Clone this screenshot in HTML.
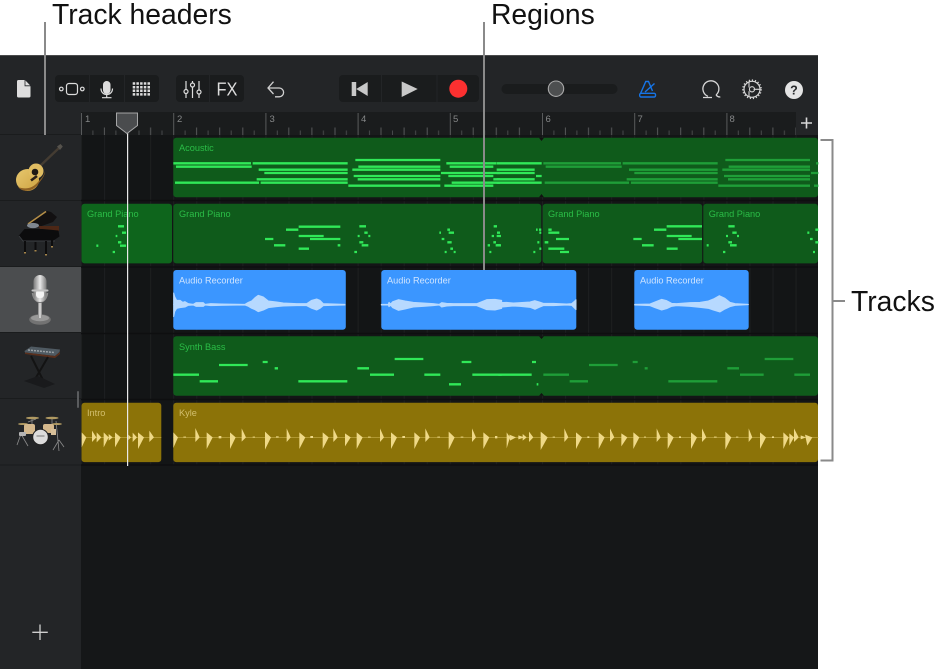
<!DOCTYPE html>
<html><head><meta charset="utf-8"><style>
html,body{margin:0;padding:0;background:#fff;width:948px;height:670px;overflow:hidden}
svg{display:block}
text{font-family:"Liberation Sans",sans-serif}
.c{font-size:28.300px;fill:#111}
.r{font-size:9.200px}
.n{font-size:9.500px;fill:#858788}
.on{fill:none;stroke:#30e858}
.fd{fill:none;stroke:#1f9e38}
</style></head><body>
<svg width="948" height="670" viewBox="0 0 948 670" xmlns="http://www.w3.org/2000/svg">
<defs>
<pattern id="rul" patternUnits="userSpaceOnUse" x="81" y="112" width="92.2" height="23">
<rect x="0" y="1" width="1" height="22" fill="#585a5b"/>
<path d="M11.9 18.500v4.500M34.900 18.500v4.500M58 18.500v4.500M81 18.500v4.500" stroke="#47494a" stroke-width="1"/>
<path d="M23.400 15.500v7.500M46.500 15.500v7.500M69.600 15.500v7.500" stroke="#565859" stroke-width="1"/>
</pattern>
<pattern id="grd" patternUnits="userSpaceOnUse" x="81" y="135" width="23.05" height="330">
<rect x="0" y="0" width="1" height="330" fill="#1d1f20"/>
</pattern>
<linearGradient id="gb" x1="0" y1="0" x2="1" y2="1"><stop offset="0" stop-color="#e6c76e"/><stop offset=".75" stop-color="#d4ac4c"/><stop offset="1" stop-color="#9c6c26"/></linearGradient>
<linearGradient id="mc" x1="0" y1="0" x2="1" y2="0"><stop offset="0" stop-color="#7a7a7a"/><stop offset=".5" stop-color="#e8e8e8"/><stop offset="1" stop-color="#7a7a7a"/></linearGradient>
</defs>

<!-- app -->
<rect x="0" y="55" width="818" height="614" fill="#232527"/>
<rect x="0" y="55" width="818" height="1" fill="#4a4b4c"/>
<rect x="81" y="135" width="737" height="534" fill="#151718"/>
<rect x="81" y="135" width="737" height="330" fill="#131516"/>
<rect x="81" y="135" width="737" height="330" fill="url(#grd)"/>
<path d="M81 200.500H818M81 267H818M81 333.500H818M81 399.500H818M81 465H818" stroke="#0e0f10" stroke-width="1.500"/>

<!-- sidebar rows -->
<rect x="0" y="267" width="81" height="65" fill="#4b4d4f"/>
<path d="M0 200.500H81M0 266.500H81M0 332.500H81M0 398.500H81M0 465H81" stroke="#1a1c1d" stroke-width="1"/>
<rect x="0" y="134" width="81" height="1" fill="#1a1c1d"/>
<rect x="77" y="391" width="2" height="17" rx="1" fill="#5a5c5e"/>

<!-- ruler -->
<rect x="81" y="112" width="715" height="23" fill="#1a1c1d"/>
<rect x="81" y="112" width="715" height="23" fill="url(#rul)"/>
<text class="n" x="85" y="122">1</text><text class="n" x="177" y="122">2</text><text class="n" x="269.500" y="122">3</text><text class="n" x="361" y="122">4</text><text class="n" x="453" y="122">5</text><text class="n" x="545.500" y="122">6</text><text class="n" x="637.500" y="122">7</text><text class="n" x="729.500" y="122">8</text>
<path d="M806.500 117.500v11M801 123h11" stroke="#d8d8d8" stroke-width="1.600"/>

<!-- toolbar groups -->
<rect x="55" y="75" width="104" height="27" rx="4" fill="#1a1c1d"/>
<rect x="176" y="75" width="68" height="27" rx="4" fill="#1a1c1d"/>
<rect x="339" y="75" width="140" height="27" rx="4" fill="#1a1c1d"/>
<path d="M89.500 75v27M124.500 75v27M209.500 75v27M381.500 75v27M437 75v27" stroke="#232527" stroke-width="1"/>
<rect x="501.500" y="84" width="116" height="10" rx="5" fill="#1a1c1d"/>
<!-- doc -->
<path d="M17 81.500a1.500 1.500 0 0 1 1.500-1.500H25l5.500 5.800V96a1.500 1.500 0 0 1-1.500 1.500H18.500A1.500 1.500 0 0 1 17 96Z" fill="#dedede"/>
<path d="M25 80v5.800h5.500" fill="none" stroke="#232527" stroke-width=".8"/>
<!-- track view -->
<g fill="none" stroke="#dcdcdc" stroke-width="1.200"><rect x="66.500" y="83.500" width="11" height="11" rx="2.500"/><circle cx="61.300" cy="89" r="1.800"/><circle cx="82.300" cy="89" r="1.800"/></g>
<!-- mic -->
<rect x="103" y="81" width="7.500" height="13" rx="3.700" fill="#dcdcdc"/>
<path d="M101 88.500c0 8 11.500 8 11.500 0M106.700 95v2.500M102 97.700h9.500" fill="none" stroke="#dcdcdc" stroke-width="1.200"/>
<!-- grid -->
<g stroke="#dcdcdc" stroke-width="2.500" stroke-dasharray="2.500 1.200" fill="none"><path d="M132.700 83.500h18M132.700 87.200h18M132.700 90.800h18M132.700 94.400h18"/></g>
<!-- mixer -->
<g stroke="#dcdcdc" stroke-width="1.200" fill="#1a1c1d"><path d="M186 81v17M192.500 81v17M199 81v17" fill="none"/><circle cx="186" cy="91.500" r="2"/><circle cx="192.500" cy="85" r="2"/><circle cx="199" cy="92" r="2"/></g>
<text x="216.500" y="95.700" textLength="21" lengthAdjust="spacingAndGlyphs" style="font-size:18.500px" fill="#dcdcdc">FX</text>
<!-- undo -->
<path d="M273.500 81.700 268 88l5.500 6M268 88h11.200a4.400 4.400 0 0 1 0 8.800h-4.200" fill="none" stroke="#d0d0d0" stroke-width="1.300"/>
<!-- transport -->
<rect x="351.700" y="82" width="4.500" height="14" fill="#c8c8c8"/><path d="M367.700 82v14L356.200 89Z" fill="#c8c8c8"/>
<path d="M401.700 81.500v15.500L417.700 89Z" fill="#c8c8c8"/>
<circle cx="458.300" cy="88.700" r="9" fill="#fc3030"/>
<circle cx="556" cy="88.700" r="7.700" fill="#4d4f50" stroke="#a9a9a9" stroke-width="1.100"/>
<!-- metronome -->
<g fill="none" stroke="#1675e8" stroke-width="1.400">
<path d="M640.500 93.500 645.800 81.500H648.500L652.500 91"/>
<rect x="639.700" y="93.300" width="15.800" height="3.700" rx="1.400"/>
<path d="M645 92 654.500 83.500"/>
</g>
<!-- loop -->
<path d="M708 96.300a8 8 0 1 1 8-1.300M703 97.500h9M716 95c1.500 1.500 3 2.500 4.300 1.700" fill="none" stroke="#d6d6d6" stroke-width="1.300"/>
<!-- gear -->
<circle cx="752" cy="89.300" r="8" fill="none" stroke="#d6d6d6" stroke-width="1.200"/>
<circle cx="752" cy="89.300" r="9" fill="none" stroke="#d6d6d6" stroke-width="1.800" stroke-dasharray="1.200 1.800"/>
<path d="M749 82v5.500M749 96.500V91.200M760 89.300h-6.500" stroke="#d6d6d6" stroke-width="1.100" fill="none"/><circle cx="752" cy="89.300" r="2.600" fill="none" stroke="#d6d6d6" stroke-width="1.100"/>
<!-- help -->
<circle cx="794" cy="90" r="9" fill="#e4e4e4"/>
<text x="794" y="94.500" text-anchor="middle" style="font-size:12.500px;font-weight:bold" fill="#26282a">?</text>

<!-- ===== regions ===== -->
<rect x="173.300" y="137.700" width="644.700" height="59.600" rx="3" fill="#0f5b1b"/>
<path d="M539 137.700h5L541.500 141ZM539 197.300h5L541.500 194Z" fill="#111"/>
<rect x="81.500" y="203.800" width="90.500" height="59.600" rx="3" fill="#0e651c"/>
<rect x="173.300" y="203.800" width="368" height="59.600" rx="3" fill="#0f5b1b"/>
<rect x="542.700" y="203.800" width="159.500" height="59.600" rx="3" fill="#0f5b1b"/>
<rect x="703.300" y="203.800" width="114.700" height="59.600" rx="3" fill="#0f5b1b"/>
<rect x="173.300" y="270" width="172.500" height="59.700" rx="3" fill="#3b96ff"/>
<rect x="381.300" y="270" width="195" height="59.700" rx="3" fill="#3b96ff"/>
<rect x="634.300" y="270" width="114.400" height="59.700" rx="3" fill="#3b96ff"/>
<rect x="173.300" y="336.300" width="644.700" height="59.400" rx="3" fill="#0f5b1b"/>
<path d="M539 336.300h5L541.500 339ZM539 395.700h5L541.500 393Z" fill="#111"/>
<rect x="81.500" y="402.800" width="79.800" height="59.300" rx="3" fill="#8c7308"/>
<rect x="173.300" y="402.800" width="644.700" height="59.300" rx="3" fill="#8c7308"/>

<!-- labels -->
<g class="r" fill="#2bbd47">
<text class="r" x="179" y="151">Acoustic</text>
<text class="r" x="87" y="217">Grand Piano</text>
<text class="r" x="179" y="217">Grand Piano</text>
<text class="r" x="548" y="217">Grand Piano</text>
<text class="r" x="708.700" y="217">Grand Piano</text>
<text class="r" x="179" y="350">Synth Bass</text>
</g>
<g class="r" fill="#cfe4ff">
<text class="r" x="179" y="283.500">Audio Recorder</text>
<text class="r" x="387" y="283.500">Audio Recorder</text>
<text class="r" x="640" y="283.500">Audio Recorder</text>
</g>
<g class="r" fill="#d2bf6e">
<text class="r" x="87" y="416">Intro</text>
<text class="r" x="179" y="416">Kyle</text>
</g>

<!-- Acoustic notes -->
<g transform="translate(170 135) scale(.33333)">
<path class="on" stroke-width="7" d="M10 85H243M248 85H533M18 95H245M266 104H533M283 114H533M260 133H533M15 143H267M272 143H533M556 75H811M565 95H811M547 104H811M551 123H811M563 133H811M535 152H811M829 85H979M839 95H970M813 114H990M835 123H970M970 133H990M845 143H990M823 152H970"/>
<path class="on" stroke-width="7" d="M386 275H511M348 284H385M386 303H461M285 312H310M420 312H511M312 331H346M386 341H417M503 331H511M568 274H588M583 293H593M563 303H569M595 303H601M568 322H580M575 331H595M553 351H561M832 284H840M836 293H852M808 293H813M815 312H823M832 322H845M841 341H849M824 351H830M851 351H857M971 274H981M981 293H990M965 303H972M970 322H978M953 331H960M977 331H990M958 351H964"/>
</g>
<g transform="translate(500 135) scale(.33333)">
<path class="on" stroke-width="7" d="M-10 85H125M-10 104H104M-10 114H104M108 123H125M-10 133H104M-10 143H125"/>
<path class="fd" stroke-width="7" d="M130 85H363M368 85H653M137 95H365M387 104H653M403 114H653M380 133H653M134 143H387M393 143H653M676 75H930M686 95H930M667 104H930M933 114H955M672 123H930M684 133H930M655 152H930M948 85H955M942 152H955"/>
<path class="on" stroke-width="7" d="M108 284H113M117 284H124M118 293H124M-10 303H3M112 322H118M-10 331H3M118 341H124M100 351H106M145 284H155M145 293H178M168 312H207M400 312H425M535 312H606M134 322H145M145 341H193M180 351H207M500 274H606M462 284H499M500 303H575M426 331H461M500 341H533M685 274H704M697 293H710M678 303H684M711 303H717M685 322H696M690 331H710M620 331H626M669 351H676M922 293H928M946 284H955M930 312H938M946 322H955M939 351H945"/>
</g>
<!-- first piano -->
<g transform="translate(0 130) scale(.33333)">
<path class="on" stroke-width="7" d="M354 289H372M366 308H378M347 318H352M354 337H364M360 347H378M289 347H295M338 366H345"/>
</g>
<!-- synth -->
<g transform="translate(170 265) scale(.33333)">
<path class="on" stroke-width="7" d="M10 329H87M89 349H144M147 300H233M278 291H293M314 310H324M385 349H532M562 310H597M600 329H672M674 282H760M763 329H811M837 358H873M875 291H904M907 329H995"/>
</g>
<g transform="translate(500 265) scale(.33333)">
<path class="on" stroke-width="7" d="M-5 329H95M96 291H108M110 358H115"/>
<path class="fd" stroke-width="7" d="M130 329H207M209 349H264M267 300H353M398 291H413M434 310H443M505 349H652M682 310H717M720 329H791M794 282H880M883 329H930"/>
</g>

<!-- audio waves -->
<g transform="translate(170 265) scale(.33333)" fill="#b7d9ff" stroke="#b7d9ff" stroke-width="3" stroke-linejoin="round">
<path d="M11 118V84L14 95 20 106 30 106 38 112 45 110 55 116 70 118 78 113 100 113 105 118 122 116 155 117 225 118 235 112 245 108 255 98 265 91 280 96 295 108 320 111 340 114 380 116 410 116 425 106 440 102 450 106 460 116 525 118Z"/>
<path d="M11 118V155L14 140 20 130 30 128 45 126 55 121 70 120 78 124 100 124 105 120 122 122 155 121 225 120 235 124 245 130 255 134 265 140 280 135 295 128 320 125 340 123 380 122 410 122 425 130 440 135 450 130 460 122 525 120Z"/>
<path d="M634 118H655L657 112 662 117 668 110 685 104 705 108 730 112 760 114 790 116 808 118 815 113 830 115 850 116 880 116 920 116 935 110 950 104 975 103 995 106V130L975 135 950 134 935 128 920 122 880 122 850 122 830 123 815 126 808 120 790 122 760 124 730 126 705 132 685 136 668 128 662 121 657 125 655 120H634Z"/>
</g>
<g transform="translate(500 265) scale(.33333)" fill="#b7d9ff" stroke="#b7d9ff" stroke-width="3" stroke-linejoin="round">
<path d="M-5 113 20 112 40 114 60 113 90 111 105 107 118 111 130 115 160 115 200 117 215 116 222 110 228 104V134L222 128 215 121 200 120 160 122 130 122 118 127 105 133 90 127 60 124 40 123 20 125-5 127Z"/>
<path d="M404 118 450 117 465 111 485 103 500 107 515 115 530 116 570 113 600 112 625 108 640 102 658 92 675 100 690 112 705 116 745 118V119L705 121 690 125 675 132 660 141 640 135 625 130 600 127 570 124 530 122 515 124 500 131 485 135 465 128 450 122 404 120Z"/>
</g>

<!-- drum waves -->
<g transform="translate(170 398) scale(.33333)" fill="#efd987">
<rect x="10" y="117" width="980" height="2" fill="#c3aa46"/>
<path d="M10 103 24 118 10 150ZM76 90 89 118 76 132ZM110 103 128 118 110 153ZM180 103 197 118 180 153ZM215 91 228 118 215 131ZM285 101 303 118 285 155ZM350 91 362 118 350 132ZM388 103 406 118 388 153ZM458 103 476 118 458 153ZM490 91 503 118 490 132ZM525 106 542 118 525 145ZM560 103 578 118 560 153ZM630 91 642 118 630 132ZM663 103 681 118 663 153ZM733 103 750 118 733 153ZM766 91 779 118 766 132ZM836 101 854 118 836 155ZM906 91 918 118 906 132ZM940 103 958 118 940 153Z"/>
<path d="M40 116h8v3h-8ZM146 114h8v7h-8ZM248 116h7v3h-7ZM318 115h8v4h-8ZM421 114h8v6h-8ZM594 116h8v3h-8ZM697 114h8v6h-8ZM802 116h8v3h-8ZM872 116h8v3h-8ZM975 114h7v7h-7Z"/>
</g>
<g transform="translate(500 398) scale(.33333)" fill="#efd987">
<rect x="-5" y="117" width="960" height="2" fill="#c3aa46"/>
<path d="M20 103 30 118 20 151ZM28 110 48 118 30 128ZM55 112 73 118 55 124ZM68 108 80 118 68 128ZM87 101 100 118 87 132ZM122 101 143 118 122 156ZM193 91 205 118 193 132ZM228 103 246 118 228 153ZM296 103 314 118 296 153ZM330 91 343 118 330 131ZM364 106 382 118 364 145ZM400 103 418 118 400 153ZM470 91 482 118 470 132ZM503 103 521 118 503 153ZM573 103 591 118 573 153ZM606 91 619 118 606 132ZM676 101 694 118 676 155ZM746 91 757 118 746 132ZM780 103 798 118 780 153ZM850 103 866 118 850 153ZM868 106 882 118 868 143ZM882 91 896 118 882 132ZM902 112 918 118 902 124ZM915 110 937 118 922 143Z"/>
<path d="M158 116h7v3h-7ZM262 115h6v5h-6ZM432 116h6v3h-6ZM537 115h6v5h-6ZM642 116h8v3h-8ZM708 116h7v3h-7ZM816 115h6v5h-6Z"/>
</g>
<g transform="translate(0 330) scale(.33333)" fill="#efd987">
<rect x="245" y="321" width="239" height="2" fill="#c3aa46"/>
<path d="M245 307 259 322 245 352ZM276 302 289 322 276 336ZM290 307 304 322 290 337ZM311 307 326 322 311 352ZM326 312 338 322 326 332ZM345 307 362 322 345 352ZM385 314 393 322 385 330ZM398 308 411 322 398 336ZM414 307 432 322 414 357ZM448 302 462 322 448 336Z"/>
</g>

<!-- playhead -->
<rect x="127" y="133" width="1.200" height="333" fill="#e9e9e9"/>
<path d="M116.500 113h21v12.500l-10.500 8-10.500-8Z" fill="#4a4c4e" stroke="#a5a6a7" stroke-width="1"/>

<!-- instruments -->
<!-- guitar -->
<g>
<path d="M40 166 60 147" stroke="#443c32" stroke-width="2.400"/>
<path d="M57 146.500 60.500 144 62.800 146.500 60 150Z" fill="#55524c"/>
<ellipse cx="27.500" cy="180" rx="11.500" ry="11" fill="url(#gb)"/>
<ellipse cx="36" cy="171" rx="7.500" ry="7.500" fill="#e0bd62"/>
<path d="M18 187c5 6 15 5 21-4 2-3 6-7 6-12-1 5-4 8-7 11-5 6-12 8-20 5Z" fill="#8f6224"/>
<circle cx="35" cy="172" r="3.300" fill="#1f1a14"/>
<path d="M31 180.500 37 176" stroke="#2a2018" stroke-width="2.600"/>
</g>
<!-- piano -->
<g>
<path d="M28 224 47 211 51 212 57 217 53 222 36 228Z" fill="#121011"/>
<path d="M28 224 46 211.500" stroke="#b58f48" stroke-width="1.500"/>
<path d="M38 226 59 226V231L41 230Z" fill="#4c2716"/>
<path d="M18.500 236l6-7 18 0 16 1.500 1 6-6 4H22Z" fill="#0c0c0d"/>
<ellipse cx="33" cy="225.500" rx="6" ry="2.600" fill="#7f8790"/>
<path d="M19 236l4 5h32" fill="none" stroke="#3a3d41" stroke-width="1"/>
<path d="M25 241v11M35.500 242v8M46 241v13M52 240v6" stroke="#0c0c0d" stroke-width="2"/>
<path d="M25 252v1.500M35.500 250v1.500M46 254v1.500M52 246v1.500" stroke="#a6854a" stroke-width="2"/>
</g>
<!-- mic -->
<g>
<ellipse cx="40" cy="319.500" rx="10.800" ry="5.300" fill="#737373"/>
<ellipse cx="40" cy="318" rx="9" ry="3.200" fill="#989898"/>
<rect x="38" y="303" width="4" height="15" fill="url(#mc)"/>
<path d="M32.500 293c1 6 4 9 7.500 9s6.500-3 7.500-9" fill="none" stroke="#8f8f8f" stroke-width="1.500"/>
<rect x="33.500" y="275" width="13" height="27" rx="6.500" fill="url(#mc)"/>
<rect x="36" y="290" width="8" height="8" rx="3" fill="#f4f4f4"/>
<rect x="31.500" y="289.500" width="17" height="2" rx="1" fill="#c2c2c2"/>
</g>
<!-- keyboard -->
<g>
<path d="M24.500 351 31 346.500 60 349.500 59.500 352 55 356 25 352.500Z" fill="#4f5a62"/>
<path d="M25 352.500 55 356 60 352V354L55 358 25 354Z" fill="#5a2f1c"/>
<path d="M28 350 54 352.500" stroke="#9aa0a4" stroke-width="1.500" stroke-dasharray="2 1"/>
<path d="M31 356 46 386M48 357 34 381" stroke="#131313" stroke-width="2"/>
<path d="M24 381 38 376 55 384 44 388Z" fill="#191a1c"/>
</g>
<!-- drums -->
<g>
<path d="M21 434 17 445M21 434l7 12M56 421 59 451M59 440 64 447M59 440 53 450M36 419 28 422M32 419v8M52 419v8" stroke="#8c8c8c" stroke-width=".8" fill="none"/>
<ellipse cx="32.500" cy="418" rx="6.500" ry="1.200" fill="#b09a62"/>
<ellipse cx="52" cy="418" rx="6.500" ry="1.200" fill="#b09a62"/>
<ellipse cx="23" cy="424" rx="5" ry="1" fill="#b09a62"/>
<ellipse cx="57" cy="424" rx="5" ry="1" fill="#b09a62"/>
<rect x="24" y="424" width="11" height="10" rx="2" fill="#d4b88c"/>
<rect x="43" y="424" width="11" height="9" rx="2" fill="#d4b88c"/>
<rect x="51" y="429" width="5" height="6" fill="#d8c09a"/>
<circle cx="40.500" cy="437" r="7.800" fill="#dcdcdc" stroke="#222" stroke-width="1"/>
<rect x="36.500" y="435.500" width="8" height="1" fill="#777"/>
<rect x="19" y="432" width="7" height="4" rx="1" fill="#b4b4b4"/>
</g>
<!-- add -->
<path d="M40 624.500v15.500M32.300 632.300h15.500" stroke="#cfcfcf" stroke-width="1.300"/>

<!-- callouts -->
<rect x="44" y="22" width="2" height="113" fill="#8a8a8a"/>
<rect x="483" y="22" width="2" height="248" fill="#8a8a8a"/>
<path d="M820.500 140H832.500V460.500H820.500M833 301H845" fill="none" stroke="#8a8a8a" stroke-width="2"/>
<text class="c" x="52" y="24">Track headers</text>
<text class="c" x="491" y="24">Regions</text>
<text class="c" x="851" y="311">Tracks</text>
</svg>
</body></html>
